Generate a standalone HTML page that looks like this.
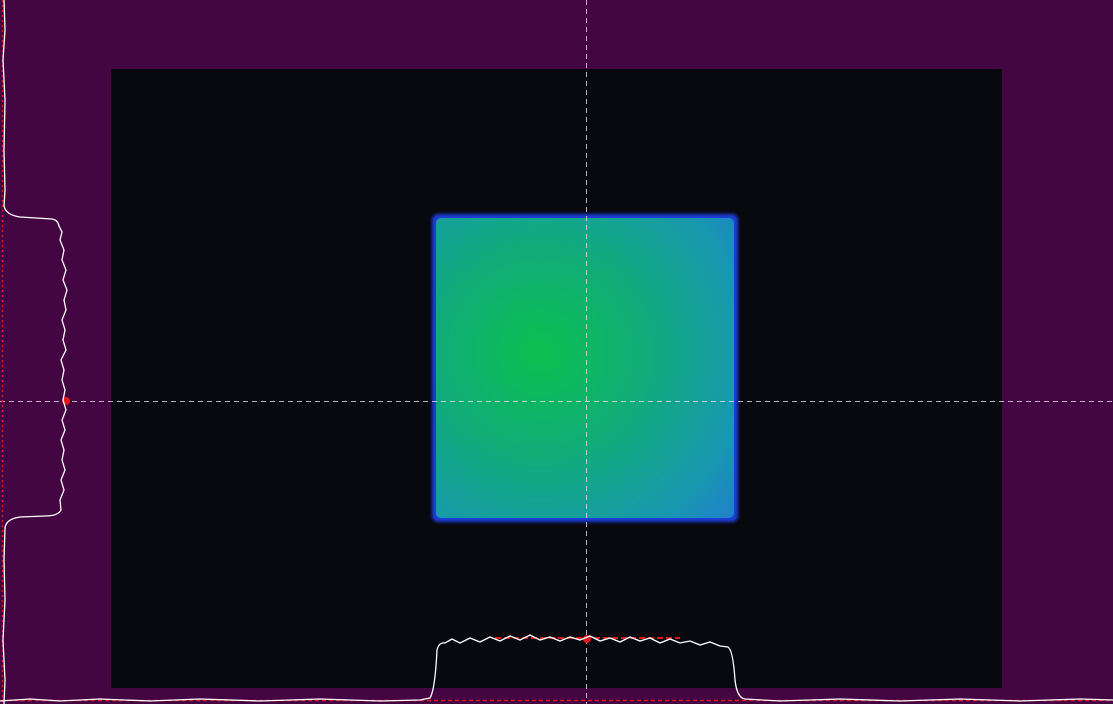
<!DOCTYPE html>
<html><head><style>html,body{margin:0;padding:0;background:#430643;overflow:hidden;width:1113px;height:704px}</style></head>
<body>
<svg width="1113" height="704" viewBox="0 0 1113 704" xmlns="http://www.w3.org/2000/svg" style="display:block">
<defs>
<radialGradient id="g" cx="0.35" cy="0.45" r="0.85">
<stop offset="0" stop-color="#0bbf4e"/>
<stop offset="0.4" stop-color="#10ad78"/>
<stop offset="0.8" stop-color="#1898b0"/>
<stop offset="1" stop-color="#1f80cc"/>
</radialGradient>
<filter id="b"><feGaussianBlur stdDeviation="1.5"/></filter>
</defs>
<rect width="1113" height="704" fill="#430643"/>
<rect x="111" y="69" width="891" height="619" fill="#08080f"/>
<rect x="432" y="214" width="306" height="308" rx="6" fill="#1e3cd8" filter="url(#b)"/>
<rect x="436" y="218" width="298" height="300" rx="5" fill="url(#g)"/>
<line x1="586.5" y1="0" x2="586.5" y2="704" stroke="#e6dcea" stroke-width="1" stroke-dasharray="5,4" opacity="0.8"/>
<line x1="0" y1="401.5" x2="1113" y2="401.5" stroke="#e6dcea" stroke-width="1" stroke-dasharray="5,4" opacity="0.8"/>
<line x1="2.5" y1="0" x2="2.5" y2="704" stroke="#e01818" stroke-width="1.5" stroke-dasharray="2,3"/>
<line x1="0" y1="700.5" x2="1113" y2="700.5" stroke="#e01818" stroke-width="1.5" stroke-dasharray="4,3"/>
<line x1="495" y1="638" x2="680" y2="638" stroke="#e01818" stroke-width="2" stroke-dasharray="6,3"/>
<circle cx="66" cy="401" r="4" fill="#e01818"/>
<circle cx="587" cy="639" r="4" fill="#e01818"/>
<path fill="none" stroke="#fff" stroke-width="1.3" d="M4 0 L5 30 L3 60 L5 100 L4 150 L5 190 L4 206 Q6 215 20 217 L52 219 Q58 220 59 226 L62 232 L60 240 L64 250 L62 260 L66 270 L63 280 L67 290 L64 300 L66 310 L62 320 L65 330 L63 340 L66 350 L61 360 L64 370 L62 380 L65 390 L63 400 L66 410 L62 420 L65 430 L61 440 L64 450 L62 460 L65 470 L61 480 L64 490 L60 500 L61 510 Q58 516 45 516 L20 517 Q6 519 5 528 L4 560 L5 600 L3 640 L5 680 L4 704"/>
<path fill="none" stroke="#fff" stroke-width="1.3" d="M0 701 L30 699 L60 701 L100 699 L150 701 L200 699 L260 701 L320 699 L380 701 L420 700 L430 698 Q435 690 437 650 Q439 642 445 643 L452 639 L460 643 L470 638 L480 642 L490 637 L500 641 L510 636 L520 640 L530 635 L540 640 L550 637 L560 641 L570 637 L580 640 L590 636 L600 641 L610 638 L620 642 L630 637 L640 641 L650 638 L660 643 L670 639 L680 643 L690 641 L700 645 L710 642 L720 646 L728 647 Q733 650 735 680 Q737 698 745 699 L780 701 L840 699 L900 701 L960 699 L1020 701 L1080 699 L1113 700"/>
</svg>
</body></html>
